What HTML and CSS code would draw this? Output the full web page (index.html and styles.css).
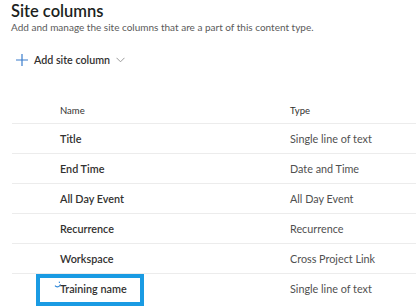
FILE: index.html
```html
<!DOCTYPE html>
<html>
<head>
<meta charset="utf-8">
<link rel="stylesheet" href="styles.css">
</head>
<body>
<div class="page">
  <h1 class="title">Site columns</h1>
  <p class="subtitle">Add and manage the site columns that are a part of this content type.</p>
  <div class="toolbar">
    <svg class="plus" width="12" height="12" viewBox="0 0 12 12"><path d="M6 0V12M0 6H12" stroke="#3a7dcc" stroke-width="1.2" fill="none"/></svg>
    <span class="add-label">Add site column</span>
    <svg class="chev" width="9" height="6" viewBox="0 0 9 6"><path d="M0.5 0.8L4.5 4.8L8.5 0.8" stroke="#9a9a9a" stroke-width="1" fill="none"/></svg>
  </div>
  <div class="table">
    <div class="row head"><span class="name">Name</span><span class="type">Type</span></div>
    <div class="row"><span class="name">Title</span><span class="type">Single line of text</span></div>
    <div class="row"><span class="name">End Time</span><span class="type">Date and Time</span></div>
    <div class="row"><span class="name">All Day Event</span><span class="type">All Day Event</span></div>
    <div class="row"><span class="name">Recurrence</span><span class="type">Recurrence</span></div>
    <div class="row"><span class="name">Workspace</span><span class="type">Cross Project Link</span></div>
    <div class="row last"><span class="name">Training name</span><span class="type">Single line of text</span>
      <div class="highlight">
        <svg class="spin" width="8" height="7" viewBox="0 0 8 7"><path d="M1 4.6A3 3 0 0 0 6.4 3.2" stroke="#2f86d8" stroke-width="1.1" fill="none"/><path d="M5.2 0.6L5.5 2" stroke="#2f86d8" stroke-width="1.1"/></svg>
      </div>
    </div>
  </div>
</div>
</body>
</html>
```
FILE: styles.css
```css
html, body {
  margin: 0;
  padding: 0;
  background: #ffffff;
}
body {
  font-family: Lato, "Noto Sans", sans-serif;
  color: #323130;
  width: 416px;
  height: 308px;
  overflow: hidden;
}
.page {
  padding-left: 11px;
}
.title {
  margin: 3px 0 0 0;
  font-size: 16.5px;
  line-height: 17px;
  font-weight: 600;
  color: #201f1e;
}
.subtitle {
  margin: 0;
  font-size: 10px;
  line-height: 14px;
  color: #5a5a5a;
}
.toolbar {
  display: flex;
  align-items: center;
  height: 20px;
  margin-top: 16px;
  padding-left: 5px;
}
.plus {
  display: block;
}
.add-label {
  margin-left: 6px;
  font-size: 10.7px;
  line-height: 14px;
  font-weight: 600;
  color: #323130;
}
.chev {
  margin-left: 6px;
  display: block;
}
.table {
  margin-top: 26px;
  margin-left: 1px;
}
.row {
  display: flex;
  align-items: center;
  height: 30px;
  padding-bottom: 1px;
  border-bottom: 1px solid #ececec;
  box-sizing: border-box;
  position: relative;
  font-size: 10.8px;
}
.row.head {
  height: 28px;
  padding-bottom: 0;
  padding-top: 2px;
  font-size: 9.5px;
}
.row.last {
  border-bottom: none;
}
.name {
  width: 230px;
  flex: none;
  padding-left: 48px;
  font-weight: 600;
  color: #323130;
}
.head .name, .head .type {
  font-weight: 400;
  color: #323130;
}
.type {
  color: #505050;
}
.highlight {
  position: absolute;
  left: 24px;
  top: 0;
  width: 108px;
  height: 32px;
  box-sizing: border-box;
  border: 4px solid #1a9be3;
}
.spin {
  position: absolute;
  left: 14px;
  top: 3px;
}
```
